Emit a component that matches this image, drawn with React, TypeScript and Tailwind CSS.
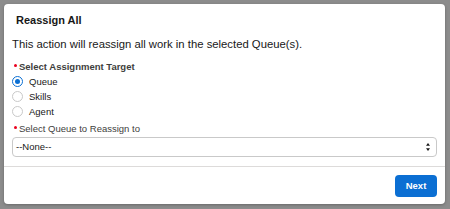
import React from "react";

const font = { fontFamily: '"Liberation Sans", Arial, sans-serif' };

type RadioProps = { label: string; checked?: boolean };

function Radio({ label, checked = false }: RadioProps) {
  return (
    <div className="flex h-[15px] items-center">
      {checked ? (
        <span className="flex h-[11px] w-[11px] items-center justify-center rounded-full border border-[#0b6fd3] bg-white">
          <span className="h-[5px] w-[5px] rounded-full bg-[#0b6fd3]" />
        </span>
      ) : (
        <span className="h-[11px] w-[11px] rounded-full border border-[#c9c9c9] bg-white" />
      )}
      <span className="ml-[6px] text-[9.5px] leading-[12px] text-[#181818]">{label}</span>
    </div>
  );
}

function Required() {
  return <span className="mr-[2px] mb-[3px] h-[3px] w-[3px] rounded-full bg-[#ea001e]" />;
}

export default function App() {
  return (
    <div className="h-[209px] w-[450px] bg-[#8c8c8c] pl-[4px] pt-[4px]" style={font}>
      <div className="flex h-[200px] w-[441px] flex-col rounded-[4px] bg-white shadow-[0_1px_3px_rgba(0,0,0,0.25)]">
        <div className="flex h-[32px] shrink-0 items-center pl-[12px]">
          <span className="text-[11px] font-bold text-[#181818]">Reassign All</span>
        </div>

        <div className="flex flex-col px-[8px]">
          <p className="text-[11.3px] leading-[16px] text-[#181818]">
            This action will reassign all work in the selected Queue(s).
          </p>

          <div className="mt-[9px] flex h-[12px] items-center pl-[2px] text-[9.5px] font-bold text-[#3e3e3c]">
            <Required />
            Select Assignment Target
          </div>

          <div className="mt-[1px] flex flex-col">
            <Radio label="Queue" checked />
            <Radio label="Skills" />
            <Radio label="Agent" />
          </div>

          <div className="mt-[4px] flex h-[12px] items-center pl-[2px] text-[9.5px] text-[#3e3e3c]">
            <Required />
            Select Queue to Reassign to
          </div>

          <div className="mt-[2px] flex h-[20px] items-center justify-between rounded-[4px] border border-[#c9c9c9] pl-[3px] pr-[6px]">
            <span className="text-[9.5px] text-[#181818]">--None--</span>
            <svg width="4" height="8" viewBox="0 0 4 8">
              <path d="M2 0 L4 2.8 L0 2.8 Z" fill="#181818" />
              <path d="M2 8 L4 5.2 L0 5.2 Z" fill="#181818" />
            </svg>
          </div>
        </div>

        <div className="mt-[9px] flex flex-1 items-start justify-end border-t border-[#dddbda] pr-[8px] pt-[8px]">
          <button
            type="button"
            className="h-[22px] w-[42px] rounded-[4px] bg-[#0b6fd3] text-[9.5px] font-bold text-white"
          >
            Next
          </button>
        </div>
      </div>
    </div>
  );
}
